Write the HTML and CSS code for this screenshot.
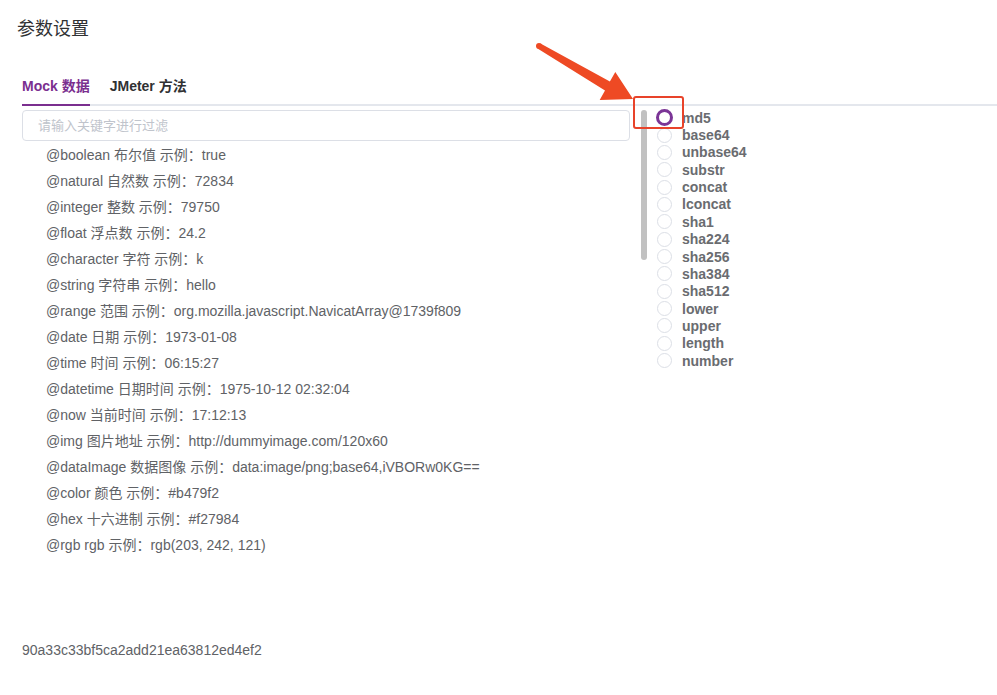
FILE: index.html
```html
<!DOCTYPE html>
<html lang="zh-CN">
<head>
  <meta charset="UTF-8" />
  <title>参数设置</title>
  <link rel="stylesheet" href="styles.css">
</head>
<body>
  <div class="page">
    <div class="title">参数设置</div>

    <div class="tabs">
      <div class="tab active">Mock 数据</div>
      <div class="tab">JMeter 方法</div>
    </div>

    <div class="panel">
      <div class="mock-col">
        <input class="filter" type="text" placeholder="请输入关键字进行过滤" />
        <ul class="mock-list">
          <li>@boolean 布尔值 示例：true</li>
          <li>@natural 自然数 示例：72834</li>
          <li>@integer 整数 示例：79750</li>
          <li>@float 浮点数 示例：24.2</li>
          <li>@character 字符 示例：k</li>
          <li>@string 字符串 示例：hello</li>
          <li>@range 范围 示例：org.mozilla.javascript.NavicatArray@1739f809</li>
          <li>@date 日期 示例：1973-01-08</li>
          <li>@time 时间 示例：06:15:27</li>
          <li>@datetime 日期时间 示例：1975-10-12 02:32:04</li>
          <li>@now 当前时间 示例：17:12:13</li>
          <li>@img 图片地址 示例：http://dummyimage.com/120x60</li>
          <li>@dataImage 数据图像 示例：data:image/png;base64,iVBORw0KG==</li>
          <li>@color 颜色 示例：#b479f2</li>
          <li>@hex 十六进制 示例：#f27984</li>
          <li>@rgb rgb 示例：rgb(203, 242, 121)</li>
        </ul>
      </div>

      <div class="method-col">
        <div class="scroll-thumb"></div>
        <div class="radio-list">
          <label class="radio checked"><span class="dot"></span>md5</label>
          <label class="radio"><span class="dot"></span>base64</label>
          <label class="radio"><span class="dot"></span>unbase64</label>
          <label class="radio"><span class="dot"></span>substr</label>
          <label class="radio"><span class="dot"></span>concat</label>
          <label class="radio"><span class="dot"></span>lconcat</label>
          <label class="radio"><span class="dot"></span>sha1</label>
          <label class="radio"><span class="dot"></span>sha224</label>
          <label class="radio"><span class="dot"></span>sha256</label>
          <label class="radio"><span class="dot"></span>sha384</label>
          <label class="radio"><span class="dot"></span>sha512</label>
          <label class="radio"><span class="dot"></span>lower</label>
          <label class="radio"><span class="dot"></span>upper</label>
          <label class="radio"><span class="dot"></span>length</label>
          <label class="radio"><span class="dot"></span>number</label>
        </div>
      </div>
    </div>

    <div class="result">90a33c33bf5ca2add21ea63812ed4ef2</div>
  </div>

  <!-- annotation drawn over the screenshot -->
  <svg class="arrow" width="110" height="70" viewBox="530 38 110 70">
    <circle cx="539" cy="46" r="3" fill="#ee4a24" />
    <polygon fill="#ee4a24" points="540.5,43.4 609.9,81.6 615.3,72 633,99 599.7,100 605,90.4 537.5,48.6" />
  </svg>
  <div class="highlight"></div>
</body>
</html>
```

FILE: styles.css
```css
body {
  margin: 0;
  font-family: "Liberation Sans", "Noto Sans CJK SC", sans-serif;
  background: #fff;
  color: #606266;
}

.page {
  padding: 17px 0 0 22px;
}

.title {
  margin-left: -5px;
  font-size: 18px;
  line-height: 24px;
  color: #303133;
}

.tabs {
  display: flex;
  gap: 20px;
  margin-top: 25px;
  height: 38px;
  border-bottom: 2px solid #e4e7ed;
}

.tab {
  position: relative;
  line-height: 40px;
  font-size: 14px;
  font-weight: bold;
  color: #303133;
}

.tab.active {
  color: #7b2f8f;
}

.tab.active::after {
  content: "";
  position: absolute;
  left: 0;
  right: 0;
  bottom: -2px;
  height: 2px;
  background: #7b2f8f;
}

.panel {
  display: flex;
  margin-top: 4px;
}

.mock-col {
  width: 608px;
}

.filter {
  box-sizing: border-box;
  width: 100%;
  height: 31px;
  padding: 0 15px;
  border: 1px solid #dcdfe6;
  border-radius: 4px;
  font-family: inherit;
  font-size: 13px;
  outline: none;
}

.filter::placeholder {
  color: #c0c4cc;
}

.mock-list {
  list-style: none;
  margin: 1px 0 0;
  padding: 0 0 0 24px;
}

.mock-list li {
  line-height: 26px;
  font-size: 14px;
  white-space: nowrap;
}

.method-col {
  display: flex;
  margin-left: 11px;
}

.scroll-thumb {
  width: 6px;
  height: 150px;
  border-radius: 3px;
  background: #c1c1c1;
}

.radio-list {
  display: flex;
  flex-direction: column;
  margin-left: 10px;
  margin-top: -1px;
}

.radio {
  display: flex;
  align-items: center;
  height: 17.36px;
  font-size: 14px;
  font-weight: bold;
  color: #6a6c70;
}

.dot {
  box-sizing: border-box;
  width: 15px;
  height: 15px;
  margin-right: 10px;
  border: 1px solid #dcdfe6;
  border-radius: 50%;
  background: #fff;
}

.radio.checked .dot {
  width: 17px;
  height: 17px;
  margin: 0 9px 0 -1px;
  border: 3px solid #7b3596;
}

.result {
  margin-top: 82px;
  font-size: 14px;
  line-height: 20px;
}

.arrow {
  position: absolute;
  left: 530px;
  top: 38px;
}

.highlight {
  position: absolute;
  left: 633px;
  top: 96px;
  width: 47px;
  height: 29px;
  border: 2px solid #e8432a;
  border-radius: 3px;
}
```
